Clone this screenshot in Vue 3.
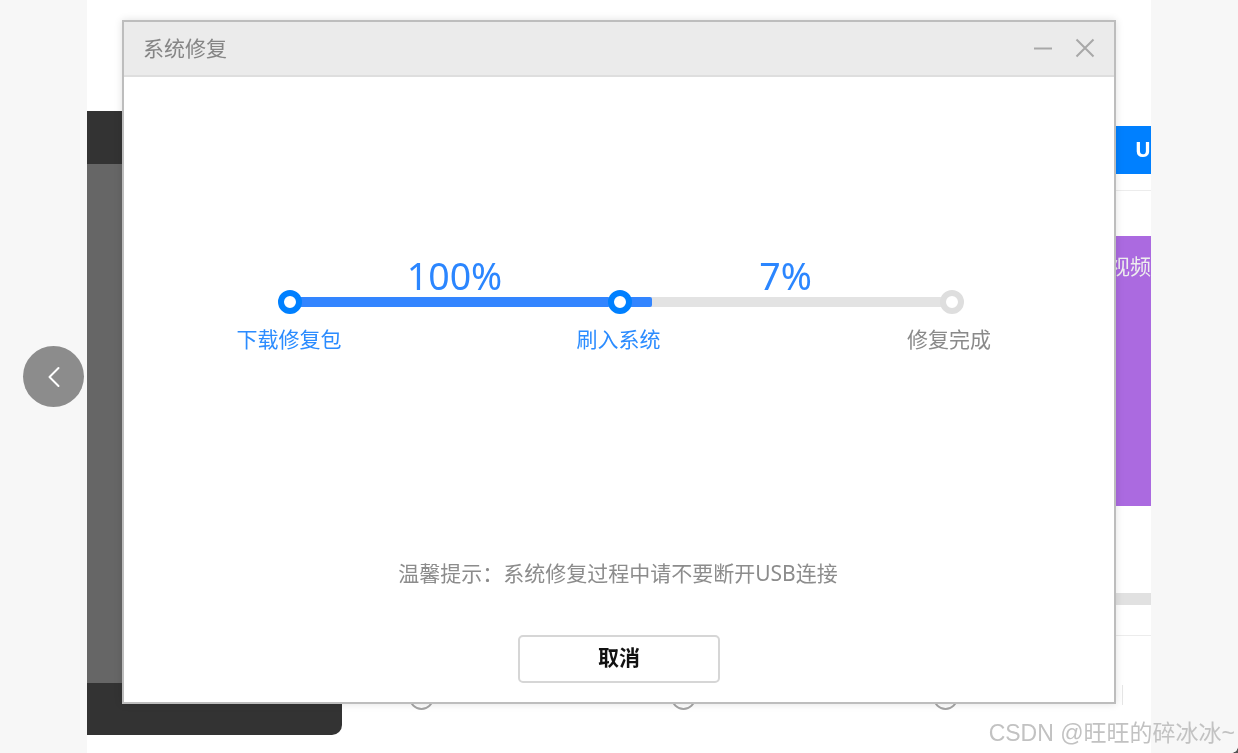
<script setup>
const steps = [
  { label: '下载修复包', state: 'done' },
  { label: '刷入系统', state: 'done' },
  { label: '修复完成', state: 'idle' },
]
const segments = [{ value: 100 }, { value: 7 }]
</script>

<template>
  <div class="page">
    <div class="panel">
      <div class="phone"><div class="screen"></div></div>
      <div class="side">
        <div class="usb-btn">U</div>
        <div class="rule first"></div>
        <div class="promo">视频</div>
        <div class="bar"></div>
        <div class="rule second"></div>
        <div class="options">
          <span class="radio"></span><span class="radio"></span><span class="radio"></span>
          <span class="sep"></span>
        </div>
      </div>
    </div>

    <button class="nav" aria-label="上一张">
      <svg width="16" height="24" viewBox="0 0 16 24"><path d="M12.5 3 L3.5 12 L12.5 21" fill="none" stroke="#fff" stroke-width="2" stroke-linecap="round" stroke-linejoin="round"/></svg>
    </button>

    <section class="modal">
      <header class="head">
        <span class="title">系统修复</span>
        <div class="controls">
          <svg width="20" height="20" viewBox="0 0 20 20"><path d="M1 10.5 H19" stroke="#a8a8a8" stroke-width="2"/></svg>
          <svg width="20" height="20" viewBox="0 0 20 20"><path d="M1.5 1.5 L18.5 18.5 M18.5 1.5 L1.5 18.5" stroke="#a8a8a8" stroke-width="2"/></svg>
        </div>
      </header>
      <div class="body">
        <div class="stepper">
          <div class="pct p1">{{ segments[0].value }}%</div>
          <div class="pct p2">{{ segments[1].value }}%</div>
          <span class="node n1"></span>
          <div class="seg s1"><div class="fill" :style="{ width: segments[0].value + '%' }"></div></div>
          <span class="node n2"></span>
          <div class="seg s2"><div class="fill" :style="{ width: segments[1].value + '%' }"></div></div>
          <span class="node n3 idle"></span>
          <div v-for="(s, i) in steps" :key="s.label" class="label" :class="[s.state, 'l' + (i + 1)]">{{ s.label }}</div>
        </div>
        <p class="hint">温馨提示：系统修复过程中请不要断开USB连接</p>
        <button class="cancel">取消</button>
      </div>
    </section>

    <div class="watermark">CSDN @旺旺的碎冰冰~</div>
    <div class="corner"></div>
  </div>
</template>

<style scoped>
.page {
  width: 1238px;
  height: 753px;
  background: #f7f7f7;
  padding: 0 87px;
  box-sizing: border-box;
  overflow: hidden;
  position: relative;
  font-family: "Noto Sans", "Noto Sans CJK SC", sans-serif;
  filter: blur(0.35px);
}
.panel {
  width: 1064px;
  height: 753px;
  background: #fff;
  display: flex;
  align-items: flex-start;
  overflow: hidden;
}
.phone {
  width: 255px;
  height: 624px;
  margin-top: 111px;
  flex: none;
  background: #333;
  border-radius: 0 0 10px 0;
  padding: 53px 0 52px;
  box-sizing: border-box;
}
.screen { height: 100%; background: #666; }
.side {
  flex: 1;
  min-width: 0;
  padding-top: 126px;
  display: flex;
  flex-direction: column;
}
.usb-btn {
  align-self: flex-end;
  width: 200px;
  height: 48px;
  line-height: 47px;
  padding-left: 184px;
  box-sizing: border-box;
  background: #0080ff;
  color: #fff;
  font-size: 21px;
  font-weight: 700;
  white-space: nowrap;
}
.rule { height: 1px; background: #ececec; }
.rule.first { margin-top: 16px; }
.promo {
  margin-top: 45px;
  height: 270px;
  margin-left: 660px;
  padding: 14px 0 0 107px;
  box-sizing: border-box;
  background: #ab6ae0;
  color: #eee;
  font-size: 21px;
  line-height: 32px;
  white-space: nowrap;
}
.bar { margin-top: 87px; height: 12px; margin-left: 660px; background: #e1e1e1; }
.rule.second { margin-top: 30px; }
.options {
  margin-top: 49px;
  padding-left: 67px;
  display: flex;
  gap: 237px;
  align-items: flex-start;
}
.radio {
  width: 25px;
  height: 25px;
  box-sizing: border-box;
  border: 2px solid #a5a5a5;
  border-radius: 50%;
  flex: none;
}
.sep { width: 1px; height: 20px; background: #e6e6e6; margin-left: -73px; flex: none; }

.nav {
  position: absolute;
  left: 23px;
  top: 346px;
  width: 61px;
  height: 61px;
  padding: 0;
  border: 0;
  border-radius: 50%;
  background: #8c8c8c;
  display: flex;
  align-items: center;
  justify-content: center;
}

.modal {
  position: absolute;
  left: 122px;
  top: 20px;
  width: 994px;
  height: 684px;
  box-sizing: border-box;
  background: #fff;
  border: 2px solid #bdbdbd;
  box-shadow: 0 0 8px rgba(0, 0, 0, 0.12);
  display: flex;
  flex-direction: column;
}
.head {
  height: 55px;
  flex: none;
  box-sizing: border-box;
  background: #ebebeb;
  border-bottom: 2px solid #dedede;
  padding: 0 19px 2px 19px;
  display: flex;
  align-items: center;
  justify-content: space-between;
}
.title { color: #858585; font-size: 21px; line-height: 28px; }
.controls { display: flex; gap: 22px; }
.body {
  flex: 1;
  display: flex;
  flex-direction: column;
  align-items: center;
  padding: 185px 0 19px;
  min-height: 0;
}
.stepper {
  display: grid;
  grid-template-columns: 24px 306px 24px 308px 24px;
  grid-template-rows: 28px 24px auto;
  align-items: center;
  margin-left: 3px;
  align-self: center;
}
.pct {
  color: #2b86ff;
  font-size: 37.5px;
  line-height: 28px;
  text-align: center;
  grid-row: 1;
  white-space: nowrap;
}
.p1 { grid-column: 2; }
.p2 { grid-column: 4; }
.node {
  grid-row: 2;
  width: 24px;
  height: 24px;
  box-sizing: border-box;
  border-radius: 50%;
  border: 6px solid #0080ff;
  background: #fff;
  position: relative;
  z-index: 1;
}
.node.idle { border-color: #dedede; }
.n1 { grid-column: 1; }
.n2 { grid-column: 3; }
.n3 { grid-column: 5; }
.seg {
  grid-row: 2;
  height: 10px;
  background: #e3e3e3;
  margin: 0 -2px;
}
.s1 { grid-column: 2; }
.s2 { grid-column: 4; }
.fill { height: 100%; background: #3385ff; border-radius: 0 2px 2px 0; padding-right: 1px; }
.s1 .fill { padding-right: 0; }
.label {
  grid-row: 3;
  justify-self: center;
  white-space: nowrap;
  font-size: 21px;
  line-height: 28px;
  margin-top: 11px;
}
.label.done { color: #2b8cff; }
.label.idle { color: #8a8a8a; }
.l1 { grid-column: 1; margin-right: 1px; }
.l2 { grid-column: 3; margin-right: 2px; }
.l3 { grid-column: 5; margin-right: 5px; }
.hint {
  margin: auto 2px 0 0;
  color: #8c8c8c;
  font-size: 21px;
  line-height: 28px;
  text-align: center;
}
.cancel {
  margin-top: 48px;
  width: 202px;
  height: 48px;
  flex: none;
  box-sizing: border-box;
  border: 2px solid #d6d6d6;
  border-radius: 5px;
  background: #fff;
  color: #111;
  font-family: inherit;
  font-size: 21px;
  font-weight: 700;
  padding: 0 0 4px;
  line-height: 28px;
}
.watermark {
  position: absolute;
  right: 3px;
  bottom: 5px;
  font-family: "Liberation Sans", "Noto Sans CJK SC", sans-serif;
  font-size: 23px;
  line-height: 30px;
  color: #c2c2c2;
  white-space: nowrap;
}
.corner {
  position: absolute;
  right: 0;
  bottom: 0;
  width: 6px;
  height: 6px;
  background: radial-gradient(circle at 0 0, transparent 5.5px, #555 6px);
}
</style>
